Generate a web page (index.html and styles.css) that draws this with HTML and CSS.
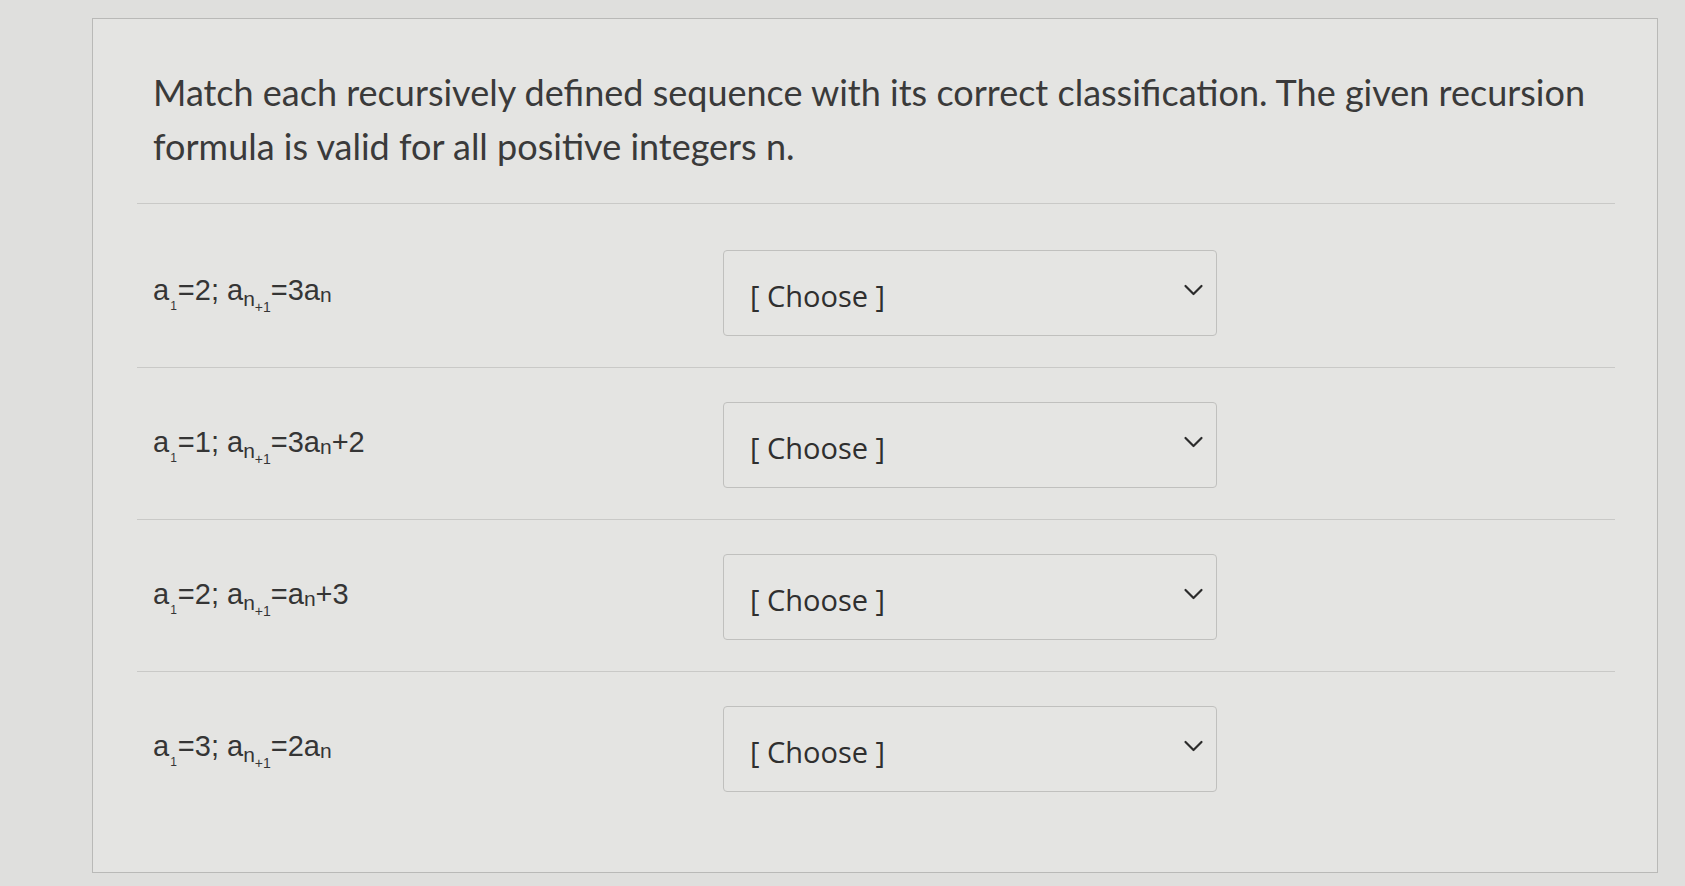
FILE: index.html
```html
<!DOCTYPE html>
<html lang="en">
<head>
<meta charset="utf-8">
<title>Match sequences</title>
<link rel="stylesheet" href="styles.css">
</head>
<body>
<div class="page">
  <div class="card">
    <div class="question">
      Match each recursively defined sequence with its correct classification. The given recursion formula is valid for all positive integers n.
    </div>
    <div class="rows">
      <div class="row">
        <div class="formula">a<sub class="s1">1</sub>=2; a<sub class="sn">n<sub class="s2">+1</sub></sub>=3a<sub class="sl">n</sub></div>
        <div class="select"><span class="choose">[ Choose ]</span><svg class="chev" viewBox="0 0 20 12" width="21" height="12"><path d="M2 2 L10 10 L18 2" fill="none" stroke="#2b2b2b" stroke-width="2.2" stroke-linecap="round" stroke-linejoin="round"/></svg></div>
      </div>
      <div class="row">
        <div class="formula">a<sub class="s1">1</sub>=1; a<sub class="sn">n<sub class="s2">+1</sub></sub>=3a<sub class="sl">n</sub>+2</div>
        <div class="select"><span class="choose">[ Choose ]</span><svg class="chev" viewBox="0 0 20 12" width="21" height="12"><path d="M2 2 L10 10 L18 2" fill="none" stroke="#2b2b2b" stroke-width="2.2" stroke-linecap="round" stroke-linejoin="round"/></svg></div>
      </div>
      <div class="row">
        <div class="formula">a<sub class="s1">1</sub>=2; a<sub class="sn">n<sub class="s2">+1</sub></sub>=a<sub class="sl">n</sub>+3</div>
        <div class="select"><span class="choose">[ Choose ]</span><svg class="chev" viewBox="0 0 20 12" width="21" height="12"><path d="M2 2 L10 10 L18 2" fill="none" stroke="#2b2b2b" stroke-width="2.2" stroke-linecap="round" stroke-linejoin="round"/></svg></div>
      </div>
      <div class="row">
        <div class="formula">a<sub class="s1">1</sub>=3; a<sub class="sn">n<sub class="s2">+1</sub></sub>=2a<sub class="sl">n</sub></div>
        <div class="select"><span class="choose">[ Choose ]</span><svg class="chev" viewBox="0 0 20 12" width="21" height="12"><path d="M2 2 L10 10 L18 2" fill="none" stroke="#2b2b2b" stroke-width="2.2" stroke-linecap="round" stroke-linejoin="round"/></svg></div>
      </div>
    </div>
  </div>
</div>
</body>
</html>
```

FILE: styles.css
```css
html, body {
  margin: 0;
  padding: 0;
  background: #dfdfdd;
}

.page {
  padding: 18px 27px 0 92px;
  height: 868px;
  overflow: hidden;
}

.card {
  background: #e4e4e2;
  border: 1.5px solid #b9b9b7;
  height: 855px;
  box-sizing: border-box;
  padding: 0 42px 0 44px;
}

.question {
  font-family: Lato, "Open Sans", sans-serif;
  font-size: 36px;
  line-height: 54px;
  color: #3a3a3a;
  padding: 46px 20px 30px 16px;
  border-bottom: 1.5px solid #c9c9c7;
}

.rows {
  display: flex;
  flex-direction: column;
}

.row {
  display: flex;
  align-items: center;
  padding: 34px 0 31px 16px;
  border-bottom: 1.5px solid #c9c9c7;
}

.row:first-child {
  padding-top: 46px;
}

.row:last-child {
  border-bottom: none;
}

.formula {
  width: 570px;
  font-family: "Liberation Sans", Arial, sans-serif;
  font-size: 29px;
  color: #353535;
  margin-top: -6px;
  white-space: nowrap;
}

.formula sub {
  line-height: 0;
}

.s1 {
  font-size: 12px;
  vertical-align: -10px;
  margin: 0 1px;
}

.sn {
  font-size: 21px;
  vertical-align: -6px;
}

.s2 {
  font-size: 14px;
  vertical-align: -6px;
}

.sl {
  font-size: 21px;
  vertical-align: -2px;
}

.select {
  width: 494px;
  height: 86px;
  box-sizing: border-box;
  border: 1.5px solid #c0c0be;
  border-radius: 4px;
  background: #e5e5e3;
  display: flex;
  align-items: center;
  justify-content: space-between;
  padding: 0 12px 0 26px;
}

.choose {
  font-family: "Open Sans", "Noto Sans", sans-serif;
  font-size: 29px;
  color: #2f2f2f;
  margin-top: 4px;
}

.chev {
  margin-top: -6px;
}
```
